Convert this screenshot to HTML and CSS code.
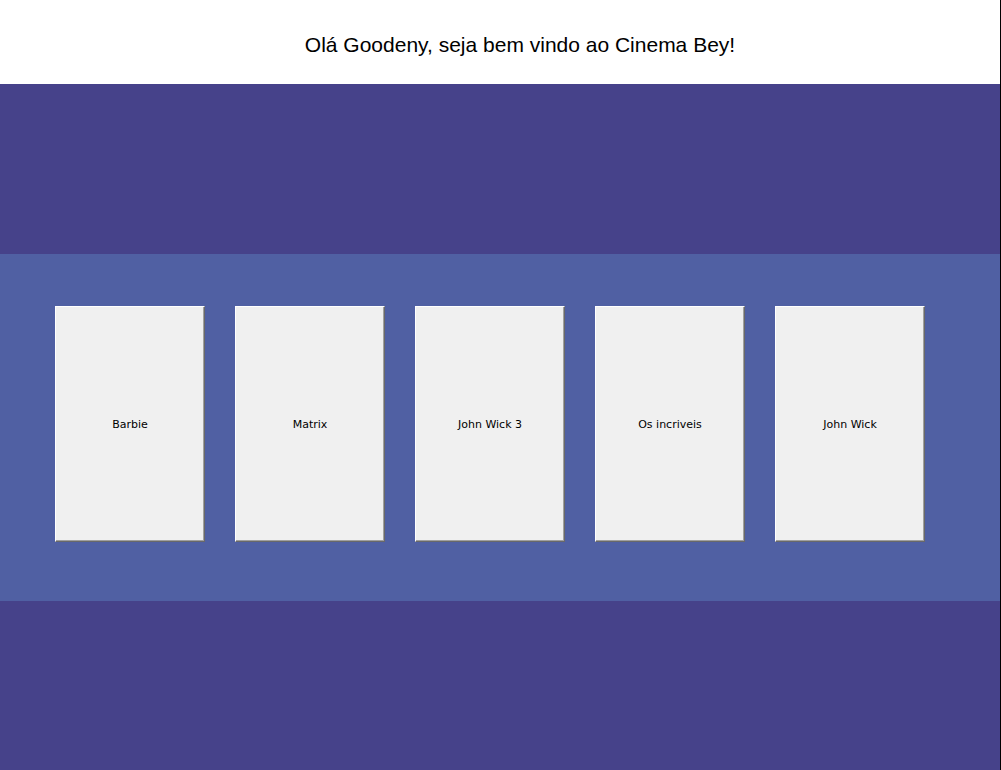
FILE: index.html
```html
<!DOCTYPE html>
<html lang="pt">
<head>
<meta charset="utf-8">
<title>Cinema Bey</title>
<link rel="stylesheet" href="styles.css">
</head>
<body>
<div class="window">
  <header class="header">
    <h1 class="greeting">Olá Goodeny, seja bem vindo ao Cinema Bey!</h1>
  </header>
  <div class="spacer-top"></div>
  <section class="movies">
    <button class="movie">Barbie</button>
    <button class="movie">Matrix</button>
    <button class="movie">John Wick 3</button>
    <button class="movie">Os incriveis</button>
    <button class="movie">John Wick</button>
  </section>
  <div class="spacer-bottom"></div>
</div>
</body>
</html>
```
FILE: styles.css
```css
html, body {
  margin: 0;
  padding: 0;
  background: #46428a;
}
.window {
  width: 1000px;
  height: 770px;
  border-right: 1px solid #000;
  display: flex;
  flex-direction: column;
  background: #46428a;
}
.header {
  height: 84px;
  background: #ffffff;
  display: flex;
  align-items: center;
  justify-content: center;
  padding-left: 40px;
  box-sizing: border-box;
}
.greeting {
  margin: 0;
  font-family: "Liberation Sans", Arial, sans-serif;
  font-weight: normal;
  font-size: 21px;
  color: #000;
  line-height: 1;
  padding-top: 4px;
}
.spacer-top {
  height: 170px;
}
.movies {
  height: 347px;
  background: #5060a3;
  box-sizing: border-box;
  padding: 52px 0 0 55px;
  display: flex;
  gap: 30px;
  align-items: flex-start;
}
.movie {
  width: 150px;
  height: 236px;
  background: #f0f0f0;
  border: none;
  border-top: 1px solid #ffffff;
  border-left: 1px solid #ffffff;
  border-right: 1px solid #696969;
  border-bottom: 1px solid #696969;
  box-shadow: inset -1px -1px 0 #a0a0a0;
  font-family: "DejaVu Sans", Tahoma, sans-serif;
  font-size: 11px;
  color: #000;
  padding: 0;
  box-sizing: border-box;
}
.spacer-bottom {
  flex: 1;
}
```
